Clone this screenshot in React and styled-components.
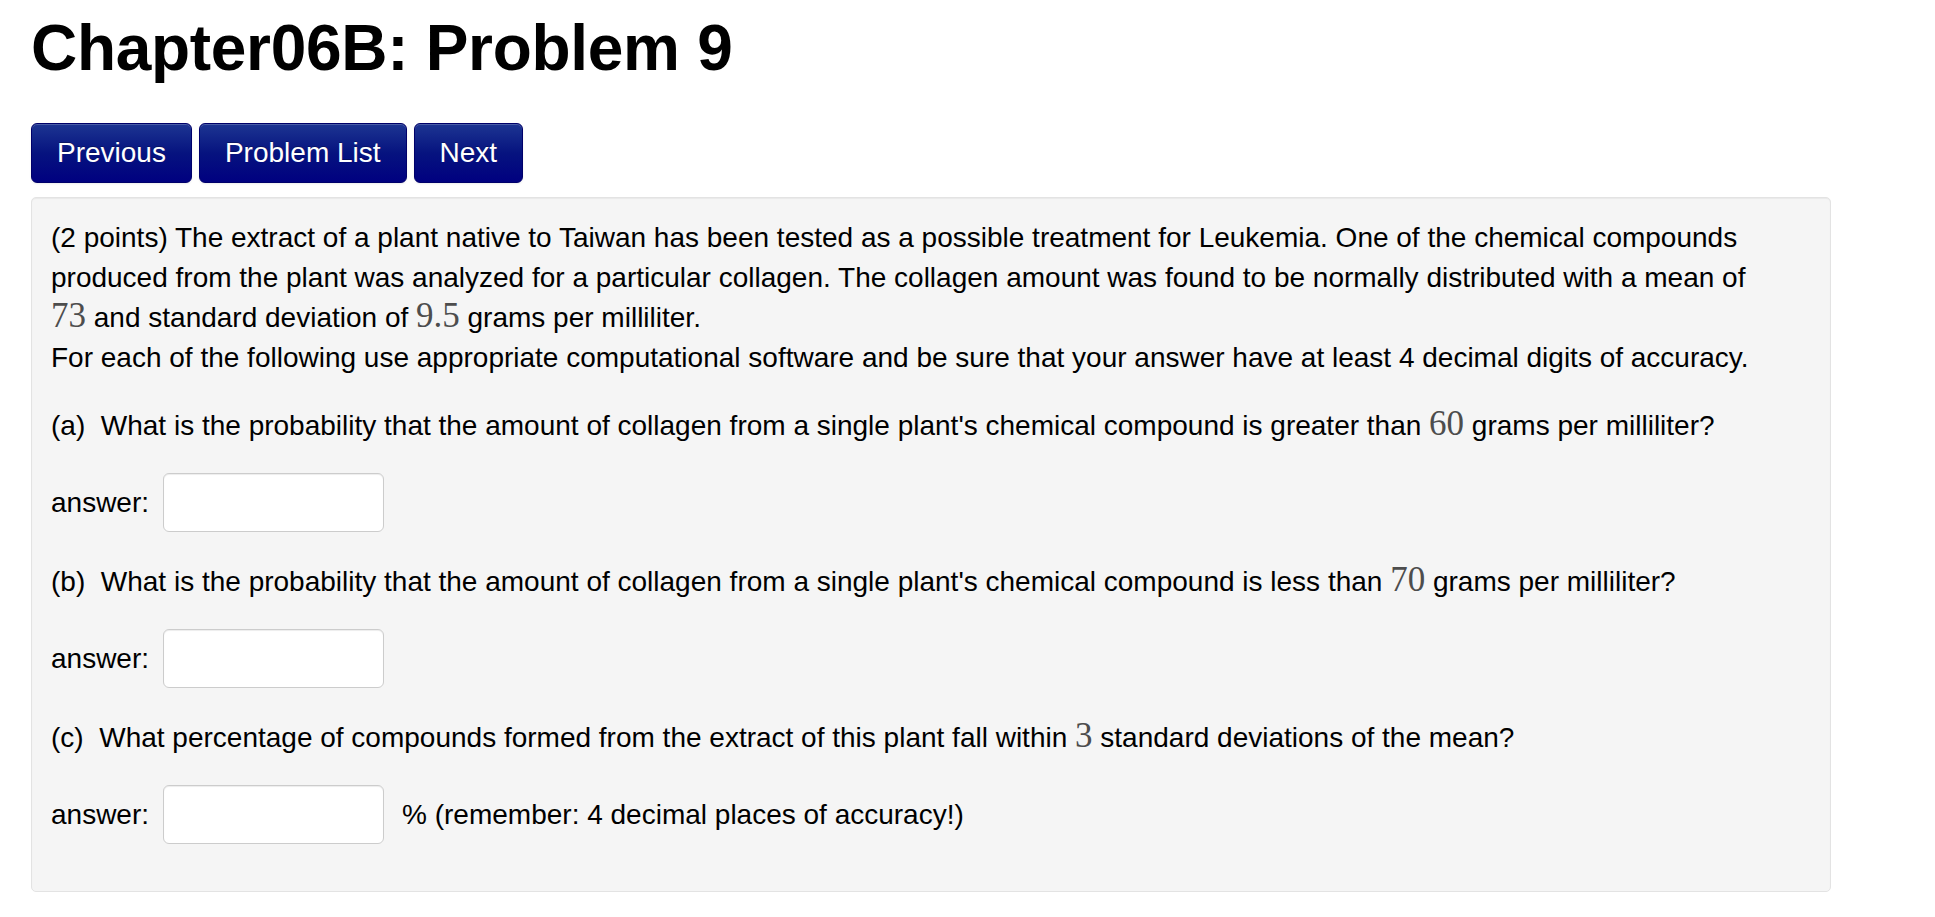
import styled, { createGlobalStyle } from 'styled-components';

const GlobalStyle = createGlobalStyle`
  html, body {
    margin: 0;
    padding: 0;
    background: #ffffff;
  }
  body {
    font-family: "Liberation Sans", Arial, Helvetica, sans-serif;
    color: #000;
  }
`;

const Page = styled.div`
  padding: 13px 0 0 31px;
`;

const Title = styled.h1`
  margin: 0;
  font-size: 64px;
  line-height: 70px;
  font-weight: 700;
  color: #000;
  letter-spacing: -0.3px;
`;

const NavBar = styled.div`
  display: flex;
  gap: 7px;
  margin-top: 40px;
`;

const NavButton = styled.button`
  height: 60px;
  padding: 0 25px;
  font-family: "Liberation Sans", Arial, Helvetica, sans-serif;
  font-size: 28px;
  color: #fff;
  background: linear-gradient(to bottom, #1d3592 0%, #06137f 50%, #000080 100%);
  border: 1px solid #00006a;
  border-radius: 6px;
  box-shadow: inset 0 1px 0 rgba(255, 255, 255, 0.2), 0 1px 2px rgba(0, 0, 0, 0.08);
  text-shadow: 0 -1px 0 rgba(0, 0, 0, 0.25);
  cursor: pointer;
`;

const Well = styled.div`
  box-sizing: border-box;
  width: 1800px;
  margin-top: 14px;
  padding: 20px 19px 47px;
  background: #f5f5f5;
  border: 1px solid #e3e3e3;
  border-radius: 5px;
  box-shadow: inset 0 1px 1px rgba(0, 0, 0, 0.05);
  font-size: 28px;
  line-height: 41px;
  display: flex;
  flex-direction: column;
`;

const Intro = styled.p`
  margin: 0 0 27px;
  line-height: 40px;
  white-space: nowrap;
`;

const Parts = styled.div`
  display: flex;
  flex-direction: column;
  gap: 29px;
`;

const Part = styled.div`
  display: flex;
  flex-direction: column;
  gap: 27px;
`;

const Question = styled.div`
  white-space: nowrap;
`;

const Math = styled.span`
  font-family: "Liberation Serif", "Times New Roman", serif;
  font-size: 35px;
  line-height: 1;
  color: #4d4d4d;
`;

const AnswerRow = styled.div`
  display: flex;
  align-items: center;
  height: 59px;
`;

const Label = styled.span`
  margin-right: 14px;
`;

const AnswerInput = styled.input`
  box-sizing: border-box;
  width: 221px;
  height: 59px;
  padding: 4px 10px;
  font-size: 28px;
  background: #fff;
  border: 1px solid #cccccc;
  border-radius: 6px;
  box-shadow: inset 0 1px 1px rgba(0, 0, 0, 0.075);
  outline: none;
`;

const Note = styled.span`
  margin-left: 18px;
`;

const parts = [
  {
    key: 'a',
    before: "What is the probability that the amount of collagen from a single plant's chemical compound is greater than ",
    value: '60',
    after: ' grams per milliliter?',
  },
  {
    key: 'b',
    before: "What is the probability that the amount of collagen from a single plant's chemical compound is less than ",
    value: '70',
    after: ' grams per milliliter?',
  },
  {
    key: 'c',
    before: 'What percentage of compounds formed from the extract of this plant fall within ',
    value: '3',
    after: ' standard deviations of the mean?',
    note: '% (remember: 4 decimal places of accuracy!)',
  },
];

const App = () => {
  return (
    <>
      <GlobalStyle />
      <Page>
        <Title>Chapter06B: Problem 9</Title>

        <NavBar>
          <NavButton>Previous</NavButton>
          <NavButton>Problem List</NavButton>
          <NavButton>Next</NavButton>
        </NavBar>

        <Well>
          <Intro>
            (2 points) The extract of a plant native to Taiwan has been tested as a possible treatment for Leukemia. One of the chemical compounds
            <br />
            produced from the plant was analyzed for a particular collagen. The collagen amount was found to be normally distributed with a mean of
            <br />
            <Math>73</Math> and standard deviation of <Math>9.5</Math> grams per milliliter.
            <br />
            For each of the following use appropriate computational software and be sure that your answer have at least 4 decimal digits of accuracy.
          </Intro>

          <Parts>
            {parts.map((part) => (
              <Part key={part.key}>
                <Question>
                  ({part.key})&nbsp; {part.before}
                  <Math>{part.value}</Math>
                  {part.after}
                </Question>
                <AnswerRow>
                  <Label>answer:</Label>
                  <AnswerInput type="text" />
                  {part.note && <Note>{part.note}</Note>}
                </AnswerRow>
              </Part>
            ))}
          </Parts>
        </Well>
      </Page>
    </>
  );
};

export default App;
